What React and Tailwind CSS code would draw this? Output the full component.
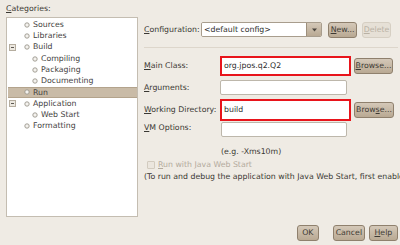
// App.jsx — NetBeans "Run" project properties panel (GTK Human theme)

import React from 'react'

const font = { fontFamily: '"DejaVu Sans", "Liberation Sans", sans-serif' }

const tree = [
  { label: 'Sources', level: 1 },
  { label: 'Libraries', level: 1 },
  { label: 'Build', level: 1, expander: true },
  { label: 'Compiling', level: 2 },
  { label: 'Packaging', level: 2 },
  { label: 'Documenting', level: 2 },
  { label: 'Run', level: 1, selected: true },
  { label: 'Application', level: 1, expander: true },
  { label: 'Web Start', level: 2 },
  { label: 'Formatting', level: 1 },
]

// Small underlined mnemonic letter
function U({ children }) {
  return <span className="underline underline-offset-1">{children}</span>
}

function Bullet() {
  return (
    <svg width="6" height="6" viewBox="0 0 6 6" className="shrink-0">
      <circle cx="3" cy="3" r="2.2" fill="#f4f2ee" stroke="#9a958c" strokeWidth="0.9" />
    </svg>
  )
}

function Expander() {
  return (
    <div className="w-[7px] h-[7px] border border-[#b5ad9f] bg-[#ece8e0] flex items-center justify-center">
      <div className="w-[3px] h-px bg-[#5c5852]" />
    </div>
  )
}

function GtkButton({ children, disabled, className = '' }) {
  return (
    <div className={`h-[16px] flex items-center justify-center rounded-[3px] border text-[7.8px] ${
      disabled
        ? 'border-[#d6cfc3] bg-[#e6e0d6] text-[#b9b1a4]'
        : 'border-[#8f806d] bg-gradient-to-b from-[#d4c8b8] to-[#b9a993] text-[#3e3a34]'
    } ${className}`}>
      {children}
    </div>
  )
}

function Field({ children, className = '' }) {
  return (
    <div className={`h-[15px] bg-white border border-[#bdb7ab] rounded-[2px] flex items-center px-[2px] text-[7.8px] text-[#2e2e2e] ${className}`}>
      {children}
    </div>
  )
}

function Label({ children, className = '' }) {
  return <div className={`w-[76px] shrink-0 text-[7.8px] text-[#3a3833] ${className}`}>{children}</div>
}

export default function App() {
  return (
    <div className="w-[400px] h-[245px] bg-[#efebe4] overflow-hidden flex" style={font}>

      {/* Categories tree */}
      <div className="w-[138px] shrink-0 pl-[6px] pt-[2px]">
        <div className="text-[7.8px] text-[#3a3833] h-[14px] leading-[14px]"><U>C</U>ategories:</div>
        <div className="mt-[1px] h-[200px] bg-white border border-[#c4bdb1] pt-[1px] pl-[1px]">
          {tree.map(item => (
            <div key={item.label}
              className={`h-[11.3px] flex items-center text-[7.8px] text-[#43413e] ${item.selected ? 'bg-[#c9bba7] border-y border-[#b3a38c]' : ''}`}>
              <div className="w-[16px] shrink-0 flex items-center pl-[1px]">
                {item.expander && <Expander />}
              </div>
              <div className={`${item.level === 2 ? 'w-[8px]' : 'w-0'} shrink-0`} />
              <Bullet />
              <span className="ml-[3px]">{item.label}</span>
            </div>
          ))}
        </div>
      </div>

      {/* Run settings */}
      <div className="flex-1 pl-[6px] pt-[22px] flex flex-col">
        <div className="flex items-center h-[15px]">
          <div className="w-[57px] shrink-0 text-[7.8px] text-[#3a3833]"><U>C</U>onfiguration:</div>
          <div className="w-[121px] h-[15px] flex border border-[#a89d8d] rounded-[2px] overflow-hidden">
            <div className="flex-1 bg-white text-[7.8px] text-[#2e2e2e] flex items-center px-[2px]">&lt;default config&gt;</div>
            <div className="w-[15px] bg-gradient-to-b from-[#d4c8b8] to-[#b9a993] border-l border-[#9d8f7c] flex items-center justify-center">
              <svg width="5" height="4" viewBox="0 0 5 4"><path d="M0 0.5h5L2.5 3.5z" fill="#4a453e" /></svg>
            </div>
          </div>
          <GtkButton className="w-[29px] ml-[6px]"><U>N</U>ew...</GtkButton>
          <GtkButton disabled className="w-[29px] ml-[5px]"><U>D</U>elete</GtkButton>
        </div>

        <div className="h-px bg-[#ddd6cb] mt-[10px] mr-[6px]" />

        <div className="flex items-center mt-[8px] h-[20px]">
          <Label><U>M</U>ain Class:</Label>
          <div className="w-[131px] h-[20px] border-2 border-[#e8141b] bg-white flex items-center px-[2px] text-[7.8px] text-[#2e2e2e]">org.jpos.q2.Q2</div>
          <GtkButton className="w-[39px] ml-[3px]"><U>B</U>rowse...</GtkButton>
        </div>

        <div className="flex items-center mt-[4px]">
          <Label><U>A</U>rguments:</Label>
          <Field className="w-[127px]" />
        </div>

        <div className="flex items-center mt-[4px] h-[22px]">
          <Label><U>W</U>orking Directory:</Label>
          <div className="w-[131px] h-[22px] border-2 border-[#e8141b] bg-white flex items-center px-[2px] text-[7.8px] text-[#2e2e2e]">build</div>
          <GtkButton className="w-[40px] ml-[3px]">Brow<U>s</U>e...</GtkButton>
        </div>

        <div className="flex items-start mt-[1px]">
          <Label className="leading-[10px] mt-[1px]"><U>V</U>M Options:</Label>
          <Field className="w-[126px] ml-[1px]" />
        </div>

        <div className="ml-[77px] mt-[10px] text-[7.8px] text-[#3a3833] leading-[10px]">(e.g. -Xms10m)</div>

        <div className="flex items-center mt-[2px] h-[12px] text-[7.8px] text-[#b3aa9c]">
          <div className="w-[8px] h-[8px] ml-[3px] border border-[#d2cbbf] bg-[#ebe6de] rounded-[1px]" />
          <span className="ml-[3px]"><U>R</U>un with Java Web Start</span>
        </div>

        <div className="text-[7.8px] text-[#3a3833] whitespace-nowrap leading-[12px]">
          (To run and debug the application with Java Web Start, first enable
        </div>

        <div className="mt-auto mb-[4px] flex justify-end pr-[6px] gap-[4px]">
          <GtkButton className="w-[22px] mr-[10px]">OK</GtkButton>
          <GtkButton className="w-[32px]">Cancel</GtkButton>
          <GtkButton className="w-[29px]"><U>H</U>elp</GtkButton>
        </div>
      </div>
    </div>
  )
}
